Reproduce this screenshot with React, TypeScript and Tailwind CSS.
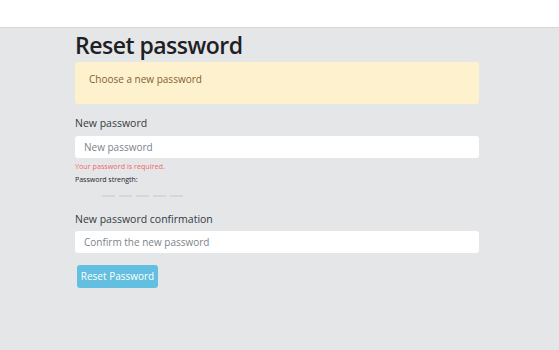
export default function App() {
  return (
    <div className="min-h-[350px] bg-[#e5e6e8] font-['Open_Sans',sans-serif]">
      {/* Top bar */}
      <div className="h-[28px] bg-white border-b border-[#d6d7d9]" />

      <div className="w-[404px] ml-[75px]">
        <h1 className="text-[23px] leading-[32px] font-semibold text-[#1d2125] mt-[1px] tracking-[-0.5px]">
          Reset password
        </h1>

        <div className="mt-[1px] h-[42px] bg-[#fef1cd] rounded-[3px] pl-[14px] flex items-center pb-[7px]">
          <span className="text-[10px] text-[#836131]">Choose a new password</span>
        </div>

        <div className="mt-[12px] text-[10.5px] leading-[14px] text-[#343a40]">New password</div>
        <div className="mt-[6px] h-[22px] bg-white rounded-[3px] flex items-center pl-[9px]">
          <span className="text-[10px] text-[#7d838a]">New password</span>
        </div>
        <div className="mt-[3px] text-[7.2px] leading-[11px] text-[#f0686b]">Your password is required.</div>
        <div className="mt-[2px] text-[7px] leading-[11px] text-[#212529]">Password strength:</div>
        <div className="mt-[10px] ml-[27px] flex gap-[4px]">
          <div className="w-[13px] h-[2px] bg-[#d5d6d8]" />
          <div className="w-[13px] h-[2px] bg-[#d5d6d8]" />
          <div className="w-[13px] h-[2px] bg-[#d5d6d8]" />
          <div className="w-[13px] h-[2px] bg-[#d5d6d8]" />
          <div className="w-[13px] h-[2px] bg-[#d5d6d8]" />
        </div>

        <div className="mt-[15px] text-[10.5px] leading-[14px] text-[#343a40]">New password confirmation</div>
        <div className="mt-[5px] h-[22px] bg-white rounded-[3px] flex items-center pl-[9px]">
          <span className="text-[10px] text-[#7d838a]">Confirm the new password</span>
        </div>

        <button
          type="button"
          disabled
          className="mt-[12px] ml-[2px] w-[81px] h-[23px] rounded-[3px] bg-[#62bfdf] text-white text-[10px] flex items-center justify-center"
        >
          Reset Password
        </button>
      </div>
    </div>
  )
}
